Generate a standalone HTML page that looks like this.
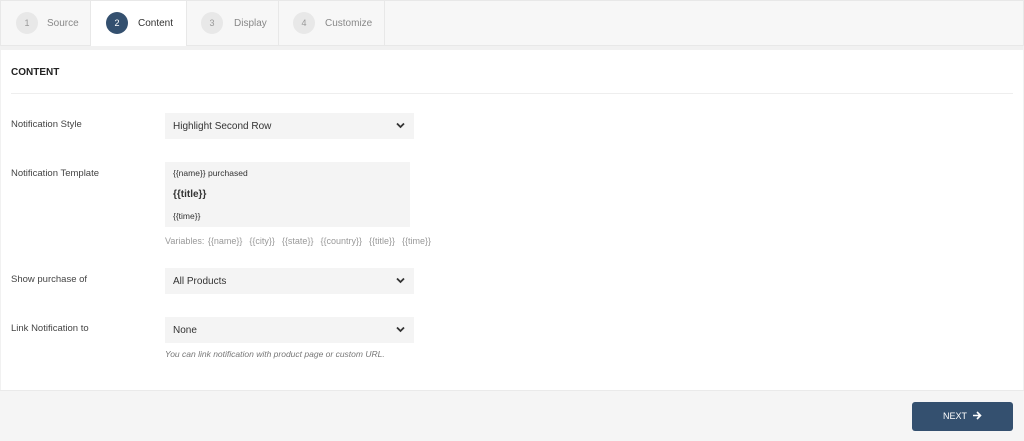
<!DOCTYPE html>
<html><head><style>
*{box-sizing:border-box;margin:0;padding:0}
body{width:1024px;height:441px;background:#f1f1f1;font-family:"Liberation Sans",sans-serif;font-size:10px;color:#333;position:relative;overflow:hidden}
.tabs{position:absolute;left:0;top:0;width:1024px;height:46px;background:#f7f7f7;border:1px solid #e8e8e8}
.tab{position:absolute;top:0;height:45px;border-right:1px solid #e8e8e8;color:#888}
.tab .c{position:absolute;top:11px;width:22px;height:22px;border-radius:50%;background:#e8e8e8;color:#999;font-size:9px;text-align:center;line-height:22px}
.tab .t{position:absolute;top:17px;font-size:10px}
.main{position:absolute;left:1px;top:50px;width:1022px;height:340px;background:#fff}
h3{position:absolute;left:11px;top:67px;font-size:10px;font-weight:bold;color:#222}
.hr{position:absolute;left:11px;right:11px;top:93px;border-top:1px solid #eee}
.lab{position:absolute;left:11px;font-size:9.5px;color:#444}
.sel{position:absolute;left:165px;width:249px;height:26px;background:#f4f4f4;font-size:10px;color:#333;padding:8px 8px}
.sel svg{position:absolute;right:9px;top:9px}
.tpl{position:absolute;left:165px;top:162px;width:245px;height:65px;background:#f4f4f4;padding:6px 8px;font-size:8.5px;color:#333}
.foot{position:absolute;left:0;top:390px;width:1024px;height:51px;background:#f5f5f5;border-top:1px solid #eaeaea}
.btn{position:absolute;left:912px;top:402px;width:101px;height:29px;background:#34506f;border-radius:3px;color:#fff;font-size:9px;text-align:center;line-height:29px}
</style></head><body>
<div class="tabs">
<div class="tab" style="left:0;width:90px"><div class="c" style="left:15px">1</div><div class="t" style="left:46px">Source</div></div>
<div class="tab" style="left:90px;width:96px;background:#fff;color:#333"><div class="c" style="left:15px;background:#34506f;color:#fff">2</div><div class="t" style="left:47px">Content</div></div>
<div class="tab" style="left:186px;width:92px"><div class="c" style="left:14px">3</div><div class="t" style="left:47px">Display</div></div>
<div class="tab" style="left:278px;width:106px"><div class="c" style="left:14px">4</div><div class="t" style="left:46px">Customize</div></div>
</div>
<div class="main"></div>
<h3>CONTENT</h3>
<div class="hr"></div>
<div class="lab" style="top:119px">Notification Style</div>
<div class="sel" style="top:113px">Highlight Second Row<svg width="9" height="7" viewBox="0 0 9 7"><path d="M1 1.5L4.5 5 8 1.5" stroke="#333" stroke-width="1.8" fill="none"/></svg></div>
<div class="lab" style="top:168px">Notification Template</div>
<div class="tpl"><div>{{name}} purchased</div><div style="font-weight:bold;font-size:10px;margin-top:11px">{{title}}</div><div style="margin-top:11px">{{time}}</div></div>
<div class="lab" style="left:165px;top:236px;font-size:9px;color:#999;word-spacing:1px">Variables: {{name}}&nbsp; {{city}}&nbsp; {{state}}&nbsp; {{country}}&nbsp; {{title}}&nbsp; {{time}}</div>
<div class="lab" style="top:274px">Show purchase of</div>
<div class="sel" style="top:268px">All Products<svg width="9" height="7" viewBox="0 0 9 7"><path d="M1 1.5L4.5 5 8 1.5" stroke="#333" stroke-width="1.8" fill="none"/></svg></div>
<div class="lab" style="top:323px">Link Notification to</div>
<div class="sel" style="top:317px">None<svg width="9" height="7" viewBox="0 0 9 7"><path d="M1 1.5L4.5 5 8 1.5" stroke="#333" stroke-width="1.8" fill="none"/></svg></div>
<div class="lab" style="left:165px;top:349px;font-size:8.5px;color:#777;font-style:italic">You can link notification with product page or custom URL.</div>
<div class="foot"></div>
<div class="btn">NEXT&nbsp; <svg width="10" height="9" viewBox="0 0 10 9" style="vertical-align:-1px"><path d="M1 4.5H8.5M5 1L8.5 4.5 5 8" stroke="#fff" stroke-width="1.6" fill="none"/></svg></div>
</body></html>
